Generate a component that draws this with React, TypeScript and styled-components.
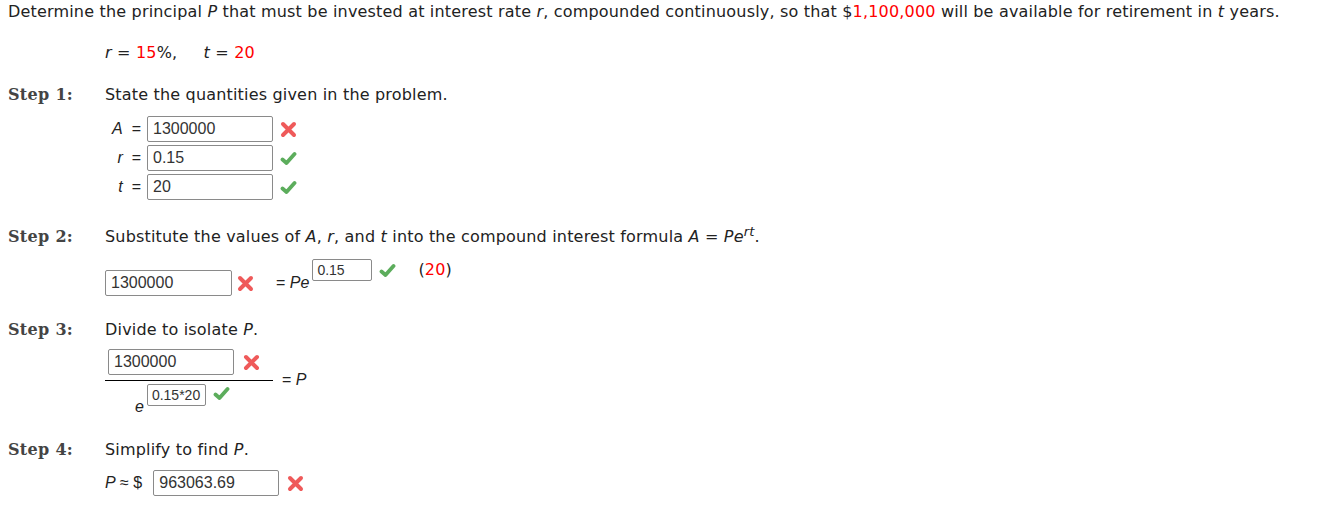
import React from 'react';
import styled, { createGlobalStyle } from 'styled-components';

const GlobalStyle = createGlobalStyle`
  body {
    margin: 0;
    background: #fff;
    color: #222;
    font-family: "DejaVu Sans", Verdana, sans-serif;
    font-size: 16px;
  }
`;

const Page = styled.div`
  padding: 0 8px;
`;

const Line = styled.div`
  line-height: 24px;
  white-space: nowrap;
  letter-spacing: 0.18px;
`;

const Given = styled(Line)`
  margin: 17px 0 0 97px;
`;

const Red = styled.span`
  color: #ff0000;
`;

const Var = styled.i`
  font-style: italic;
`;

const Sup = styled.sup`
  font-size: 13px;
  font-style: italic;
  line-height: 0;
  vertical-align: 6px;
`;

const Step = styled.div<{ $top: number }>`
  display: grid;
  grid-template-columns: 97px 1fr;
  margin-top: ${(p) => p.$top}px;
`;

const StepLabel = styled.div`
  font-family: "DejaVu Serif", Georgia, serif;
  font-weight: 700;
  font-size: 16px;
  letter-spacing: 0.3px;
  color: #444;
  line-height: 24px;
`;

const StepBody = styled.div`
  display: flex;
  flex-direction: column;
  align-items: flex-start;
`;

const Fields = styled.div`
  display: flex;
  flex-direction: column;
  gap: 3px;
  margin-top: 9px;
`;

const FieldRow = styled.div`
  display: flex;
  align-items: center;
  height: 26px;
`;

const Math = styled.span`
  font-family: "Liberation Sans", Arial, sans-serif;
  font-size: 16px;
  color: #222;
  white-space: nowrap;
`;

const FieldLabel = styled(Math)`
  width: 36px;
  text-align: right;
  margin-right: 6px;
`;

const Box = styled.div<{ $w: number; $h?: number; $small?: boolean }>`
  box-sizing: border-box;
  width: ${(p) => p.$w}px;
  height: ${(p) => p.$h ?? 26}px;
  border: 1px solid #8a8a8a;
  border-radius: 2px;
  padding-left: ${(p) => (p.$small ? 4 : 5)}px;
  display: flex;
  align-items: center;
  font-family: "Liberation Sans", Arial, sans-serif;
  font-size: ${(p) => (p.$small ? 14 : 16)}px;
  color: #333;
  background: #fff;
`;

const Mark = styled.span<{ $ml: number }>`
  display: inline-flex;
  align-items: center;
  justify-content: center;
  width: 18px;
  height: 18px;
  margin-left: ${(p) => p.$ml}px;
`;

const Cross = ({ ml }: { ml: number }) => (
  <Mark $ml={ml}>
    <svg width="17" height="17" viewBox="0 0 17 17">
      <path d="M3 3 L14 14 M14 3 L3 14" stroke="#ef5a5a" strokeWidth="4" strokeLinecap="round" />
    </svg>
  </Mark>
);

const Check = ({ ml }: { ml: number }) => (
  <Mark $ml={ml}>
    <svg width="17" height="15" viewBox="0 0 17 15">
      <path d="M2.5 8.5 L6.5 12 L14.5 3" stroke="#5cad5c" strokeWidth="3.8" fill="none" strokeLinecap="round" strokeLinejoin="round" />
    </svg>
  </Mark>
);

const EqRow = styled.div`
  display: flex;
  align-items: flex-start;
  margin-top: 10px;
`;

const MainPart = styled.div`
  display: flex;
  align-items: center;
  margin-top: 11px;
`;

const SupPart = styled.div`
  display: flex;
  align-items: center;
  margin-left: 3px;
`;

const Paren = styled.span`
  margin-left: 22px;
  line-height: 22px;
  letter-spacing: 0.18px;
`;

const Frac = styled.div`
  display: flex;
  align-items: center;
  margin-top: 7px;
`;

const FracStack = styled.div`
  display: flex;
  flex-direction: column;
  width: 168px;
`;

const Numer = styled.div`
  display: flex;
  align-items: center;
  padding: 0 0 5px 3px;
  border-bottom: 1px solid #000;
`;

const Denom = styled.div`
  display: flex;
  align-items: flex-start;
  padding: 3px 0 0 30px;
`;

const BaseE = styled(Math)`
  font-style: italic;
  margin-top: 14px;
  margin-right: 3px;
`;

const Result = styled.div`
  display: flex;
  align-items: center;
  margin-top: 8px;
`;

export default function App() {
  return (
    <Page>
      <GlobalStyle />
      <Line>
        Determine the principal <Var>P</Var> that must be invested at interest rate <Var>r</Var>,
        compounded continuously, so that $<Red>1,100,000</Red> will be available for retirement in{' '}
        <Var>t</Var> years.
      </Line>
      <Given>
        <Var>r</Var> = <Red>15</Red>%,&nbsp;&nbsp;&nbsp;&nbsp; <Var>t</Var> = <Red>20</Red>
      </Given>

      <Step $top={18}>
        <StepLabel>Step 1:</StepLabel>
        <StepBody>
          <Line>State the quantities given in the problem.</Line>
          <Fields>
            <FieldRow>
              <FieldLabel><i>A</i> &nbsp;=</FieldLabel>
              <Box $w={126}>1300000</Box>
              <Cross ml={6} />
            </FieldRow>
            <FieldRow>
              <FieldLabel><i>r</i> &nbsp;=</FieldLabel>
              <Box $w={126}>0.15</Box>
              <Check ml={6} />
            </FieldRow>
            <FieldRow>
              <FieldLabel><i>t</i> &nbsp;=</FieldLabel>
              <Box $w={126}>20</Box>
              <Check ml={6} />
            </FieldRow>
          </Fields>
        </StepBody>
      </Step>

      <Step $top={25}>
        <StepLabel>Step 2:</StepLabel>
        <StepBody>
          <Line>
            Substitute the values of <Var>A</Var>, <Var>r</Var>, and <Var>t</Var> into the compound
            interest formula <Var>A</Var> = <Var>Pe</Var>
            <Sup>rt</Sup>.
          </Line>
          <EqRow>
            <MainPart>
              <Box $w={127}>1300000</Box>
              <Cross ml={4} />
              <Math style={{ marginLeft: 22 }}>
                = <i>Pe</i>
              </Math>
            </MainPart>
            <SupPart>
              <Box $w={60} $h={22} $small>0.15</Box>
              <Check ml={6} />
              <Paren>
                (<Red>20</Red>)
              </Paren>
            </SupPart>
          </EqRow>
        </StepBody>
      </Step>

      <Step $top={22}>
        <StepLabel>Step 3:</StepLabel>
        <StepBody>
          <Line>
            Divide to isolate <Var>P</Var>.
          </Line>
          <Frac>
            <FracStack>
              <Numer>
                <Box $w={126}>1300000</Box>
                <Cross ml={8} />
              </Numer>
              <Denom>
                <BaseE>e</BaseE>
                <Box $w={59} $h={22} $small>0.15*20</Box>
                <Check ml={7} />
              </Denom>
            </FracStack>
            <Math style={{ marginLeft: 9, marginTop: -6 }}>
              = <i>P</i>
            </Math>
          </Frac>
        </StepBody>
      </Step>

      <Step $top={22}>
        <StepLabel>Step 4:</StepLabel>
        <StepBody>
          <Line>
            Simplify to find <Var>P</Var>.
          </Line>
          <Result>
            <Math style={{ marginRight: 11 }}>
              <i>P</i> ≈ $
            </Math>
            <Box $w={126}>963063.69</Box>
            <Cross ml={7} />
          </Result>
        </StepBody>
      </Step>
    </Page>
  );
}
